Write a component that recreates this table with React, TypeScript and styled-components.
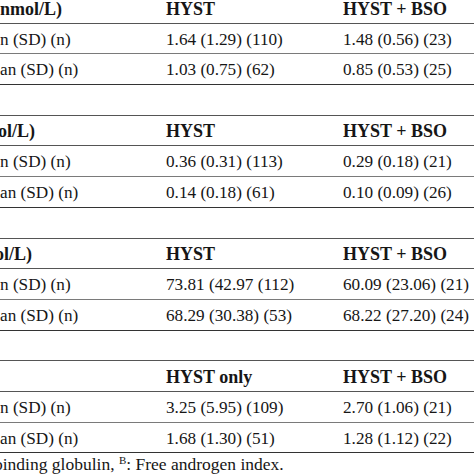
import React from "react";
import styled, { createGlobalStyle } from "styled-components";

const GlobalStyle = createGlobalStyle`
  html, body {
    margin: 0;
    padding: 0;
    background: #ffffff;
  }
`;

const Page = styled.div`
  width: 474px;
  height: 474px;
  overflow: hidden;
  background: #ffffff;
  font-family: "Liberation Serif", "DejaVu Serif", "Times New Roman", serif;
  color: #161616;
`;

const Table = styled.div`
  display: flex;
  flex-direction: column;
  margin-top: -7px;
`;

type Line = "header" | "sep" | "bottom" | "top";

const lineStyle: Record<Line, string> = {
  header: "1px solid #555",
  sep: "1px solid #7a7a7a",
  bottom: "1.5px solid #333",
  top: "1px solid #555",
};

const Row = styled.div<{ $line: Line; $bold?: boolean }>`
  box-sizing: border-box;
  height: 30.7px;
  display: grid;
  grid-template-columns: 166px 177px 1fr;
  align-items: center;
  border-bottom: ${(p) => lineStyle[p.$line]};
  font-size: ${(p) => (p.$bold ? "18px" : "17.2px")};
  font-weight: ${(p) => (p.$bold ? 700 : 400)};
  white-space: nowrap;
`;

const Cell = styled.div`
  line-height: 1.15;
  padding-top: 2px;
`;

const Label = styled(Cell)<{ $shift?: number }>`
  margin-left: ${(p) => p.$shift ?? 0}px;
`;

const Footer = styled.div`
  font-size: 17.5px;
  margin-top: 2px;
  margin-left: -6px;
  white-space: nowrap;
  line-height: 1.1;

  sup {
    font-size: 11px;
    vertical-align: 6px;
    line-height: 0;
  }
`;

type Block = {
  label: string;
  shift: number;
  cols: [string, string];
  rows: [string, string][];
};

const blocks: Block[] = [
  {
    label: "nmol/L)",
    shift: 0,
    cols: ["HYST", "HYST + BSO"],
    rows: [
      ["1.64 (1.29) (110)", "1.48 (0.56) (23)"],
      ["1.03 (0.75) (62)", "0.85 (0.53) (25)"],
    ],
  },
  {
    label: "ol/L)",
    shift: -2,
    cols: ["HYST", "HYST + BSO"],
    rows: [
      ["0.36 (0.31) (113)", "0.29 (0.18) (21)"],
      ["0.14 (0.18) (61)", "0.10 (0.09) (26)"],
    ],
  },
  {
    label: "ol/L)",
    shift: -5,
    cols: ["HYST", "HYST + BSO"],
    rows: [
      ["73.81 (42.97 (112)", "60.09 (23.06) (21)"],
      ["68.29 (30.38) (53)", "68.22 (27.20) (24)"],
    ],
  },
  {
    label: "",
    shift: 0,
    cols: ["HYST only", "HYST + BSO"],
    rows: [
      ["3.25 (5.95) (109)", "2.70 (1.06) (21)"],
      ["1.68 (1.30) (51)", "1.28 (1.12) (22)"],
    ],
  },
];

const rowLabels = ["n (SD) (n)", "an (SD) (n)"];

export default function App() {
  return (
    <Page>
      <GlobalStyle />
      <Table>
        {blocks.map((b, i) => (
          <React.Fragment key={i}>
            <Row $line="header" $bold>
              <Label $shift={b.shift}>{b.label}</Label>
              <Cell>{b.cols[0]}</Cell>
              <Cell>{b.cols[1]}</Cell>
            </Row>
            {b.rows.map((r, j) => (
              <Row key={j} $line={j === b.rows.length - 1 ? "bottom" : "sep"}>
                <Label>{rowLabels[j]}</Label>
                <Cell>{r[0]}</Cell>
                <Cell>{r[1]}</Cell>
              </Row>
            ))}
            {i < blocks.length - 1 && <Row $line="top" />}
          </React.Fragment>
        ))}
      </Table>
      <Footer>
        binding globulin, <sup>B</sup>: Free androgen index.
      </Footer>
    </Page>
  );
}
